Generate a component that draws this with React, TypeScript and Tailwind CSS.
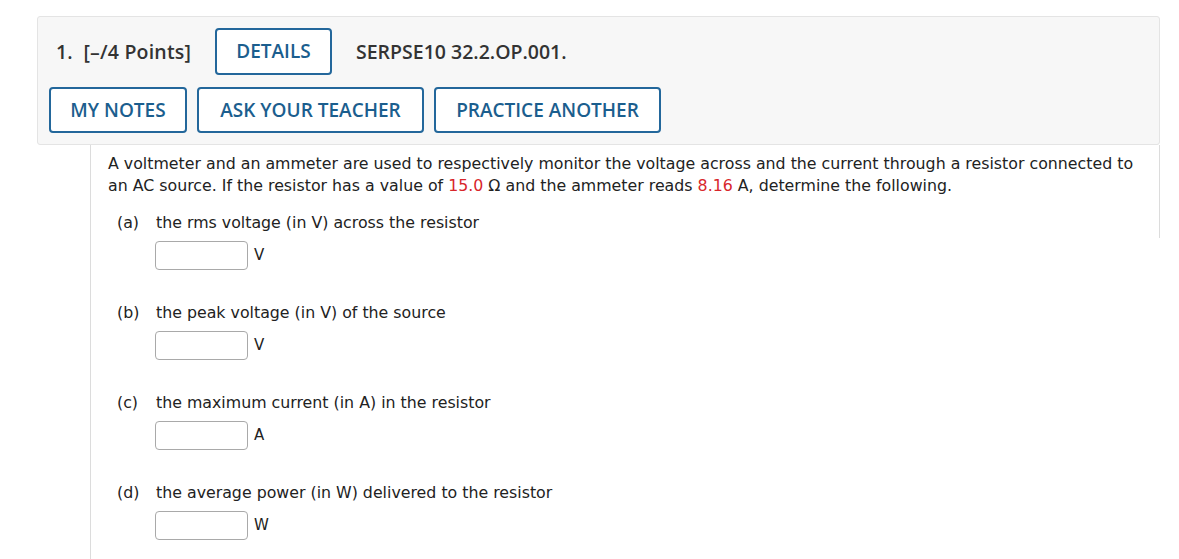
import React from "react";

const btn =
  "h-[46px] px-[19px] border-2 border-[#23679b] rounded-[4px] bg-white text-[#1b5e8e] text-[19px] font-semibold flex items-center justify-center";

function Input({ unit, mt }: { unit: string; mt: string }) {
  return (
    <div className={"flex items-center ml-[38px] " + mt}>
      <div className="w-[93px] h-[29px] border border-[#a9a9a9] rounded-[4px] bg-white" />
      <span className="ml-[6px] text-[15px]">{unit}</span>
    </div>
  );
}

function Part({ letter, label, unit }: { letter: string; label: string; unit: string }) {
  return (
    <div className="mt-[32px]">
      <div className="flex leading-[22px]">
        <span className="w-[39px]">({letter})</span>
        <span>{label}</span>
      </div>
      <Input unit={unit} mt="mt-[7px]" />
    </div>
  );
}

export default function App() {
  return (
    <div className="w-[1179px] h-[559px] bg-white overflow-hidden font-['DejaVu_Sans',Verdana,sans-serif]">
      <div className="pt-[16px] pl-[37px] w-[1160px]">
        <div className="bg-[#f7f7f7] border border-[#e4e4e4] rounded-[3px] px-[11px] pt-[11px] pb-[11px] font-['Open_Sans',sans-serif]">
          <div className="flex items-center">
            <span className="ml-[7px] text-[19.5px] font-semibold text-[#333] w-[159px] whitespace-nowrap tracking-[0.2px]">1.&nbsp; [–/4 Points]</span>
            <div className={btn + " h-[47px] px-[20px] w-[117px]"}>DETAILS</div>
            <span className="ml-[24px] text-[19.5px] font-semibold text-[#333]">SERPSE10 32.2.OP.001.</span>
          </div>
          <div className="flex gap-[10px] mt-[12px]">
            <div className={btn + " w-[138px]"}>MY NOTES</div>
            <div className={btn + " w-[227px]"}>ASK YOUR TEACHER</div>
            <div className={btn + " w-[227px]"}>PRACTICE ANOTHER</div>
          </div>
        </div>
        <div className="ml-[53px] border-l border-[#dcdcdc] text-[15.8px] text-[#222] h-[420px]">
          <div className="border-r border-[#dcdcdc] pl-[17px] pt-[8px] pb-[4px]">
            <p className="leading-[22px] pr-[20px]">
              A voltmeter and an ammeter are used to respectively monitor the voltage across and the current through a resistor connected to an AC source. If the resistor has a value of{" "}
              <span className="text-[#d8262b]">15.0</span> Ω and the ammeter reads{" "}
              <span className="text-[#d8262b]">8.16</span> A, determine the following.
            </p>
            <div className="mt-[15px] ml-[9px] flex leading-[22px]">
              <span className="w-[39px]">(a)</span>
              <span>the rms voltage (in V) across the resistor</span>
            </div>
          </div>
          <div className="pl-[26px]">
            <Input unit="V" mt="mt-[3px]" />
            <Part letter="b" label="the peak voltage (in V) of the source" unit="V" />
            <Part letter="c" label="the maximum current (in A) in the resistor" unit="A" />
            <Part letter="d" label="the average power (in W) delivered to the resistor" unit="W" />
          </div>
        </div>
      </div>
    </div>
  );
}
